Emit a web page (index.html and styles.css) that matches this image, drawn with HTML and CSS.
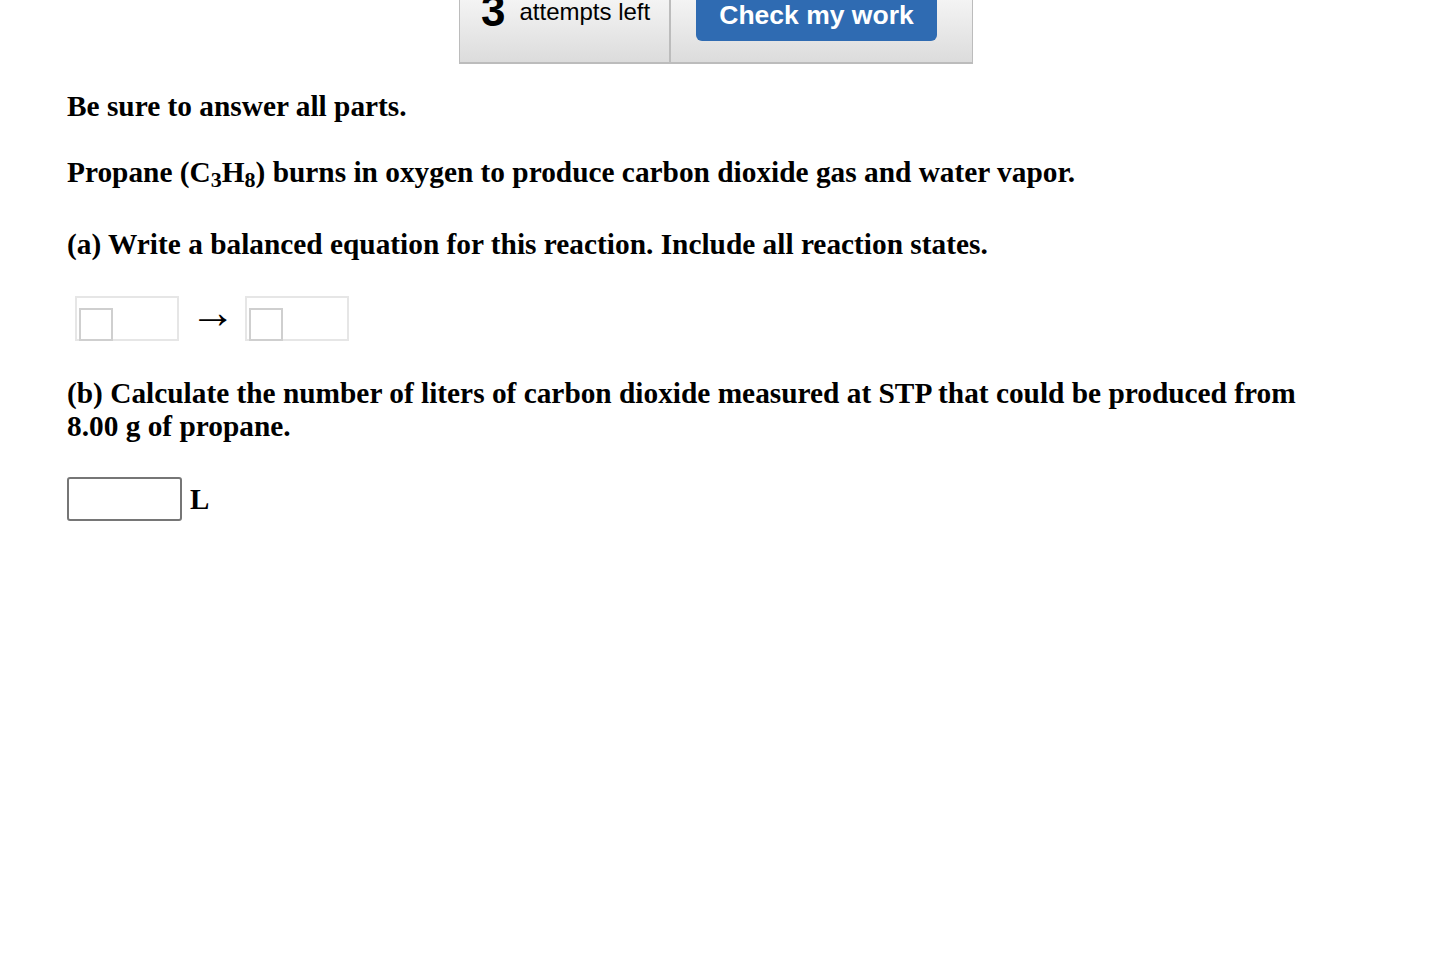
FILE: index.html
```html
<!DOCTYPE html>
<html>
<head>
<meta charset="utf-8">
<link rel="stylesheet" href="styles.css">
</head>
<body>
<div class="topbar">
  <div class="cell attempts">
    <span class="num">3</span>
    <span class="label">attempts left</span>
  </div>
  <div class="cell check">
    <button class="btn">Check my work</button>
  </div>
</div>
<main class="content">
  <p class="line l1">Be sure to answer all parts.</p>
  <p class="line l2">Propane (C<sub>3</sub>H<sub>8</sub>) burns in oxygen to produce carbon dioxide gas and water vapor.</p>
  <p class="line l3">(a) Write a balanced equation for this reaction. Include all reaction states.</p>
  <div class="equation">
    <div class="slot"><div class="inner"></div></div>
    <span class="arrow">&rarr;</span>
    <div class="slot"><div class="inner"></div></div>
  </div>
  <p class="line l4">(b) Calculate the number of liters of carbon dioxide measured at STP that could be produced from 8.00 g of propane.</p>
  <div class="answer">
    <input class="field" type="text">
    <span class="unit">L</span>
  </div>
</main>
</body>
</html>
```
FILE: styles.css
```css
html, body {
  margin: 0;
  padding: 0;
  background: #fff;
}
body {
  font-family: "Liberation Serif", "Times New Roman", serif;
  color: #000;
}
.topbar {
  display: flex;
  margin-left: 459px;
  margin-top: -30px;
  width: 514px;
  height: 94px;
  border: 1px solid #bcbcbc;
  border-top: none;
  border-bottom-width: 2px;
  box-sizing: border-box;
  background: linear-gradient(#ffffff, #dcdcdc);
}
.cell {
  box-sizing: border-box;
  height: 100%;
}
.attempts {
  width: 211px;
  border-right: 2px solid #bcbcbc;
  font-family: "Liberation Sans", Arial, sans-serif;
  display: flex;
  align-items: flex-start;
  padding-left: 21px;
}
.num {
  font-size: 44px;
  font-weight: bold;
  line-height: 1;
  margin-top: 19px;
}
.label {
  font-size: 24px;
  margin-left: 14px;
  margin-top: 28px;
}
.check {
  flex: 1;
  padding-left: 25px;
}
.btn {
  width: 241px;
  height: 71px;
  background: #2f6bb2;
  border: none;
  border-radius: 0 0 6px 6px;
  color: #fff;
  font-family: "Liberation Sans", Arial, sans-serif;
  font-weight: bold;
  font-size: 26.5px;
  padding: 19px 0 0;
  box-sizing: border-box;
  text-align: center;
  line-height: 30px;
}
.content {
  padding: 0 67px;
  width: 1260px;
}
.line {
  margin: 0;
  font-weight: bold;
  font-size: 29.35px;
  line-height: 33px;
}
.l1 { margin-top: 26px; }
.l2 { margin-top: 33px; }
.l3 { margin-top: 39px; }
sub {
  font-size: 22px;
  vertical-align: -5px;
  line-height: 0;
}
.equation {
  display: flex;
  align-items: center;
  margin-top: 35px;
  margin-left: 8px;
}
.slot {
  width: 104px;
  height: 45px;
  border: 2px solid #e6e6e6;
  box-sizing: border-box;
  position: relative;
}
.inner {
  position: absolute;
  left: 2px;
  top: 10px;
  width: 34px;
  height: 33px;
  border: 2px solid #cfcfcf;
  box-sizing: border-box;
}
.arrow {
  font-size: 46px;
  line-height: 30px;
  margin: 0 21px 12px 11px;
  width: 34px;
  text-align: center;
}
.l4 { margin-top: 36px; }
.answer {
  display: flex;
  align-items: center;
  margin-top: 34px;
  gap: 8px;
}
.field {
  width: 115px;
  height: 44px;
  box-sizing: border-box;
  border: 2px solid #767676;
  border-radius: 3px;
  margin: 0;
  padding: 0;
}
.unit {
  font-weight: bold;
  font-size: 29px;
}
```
